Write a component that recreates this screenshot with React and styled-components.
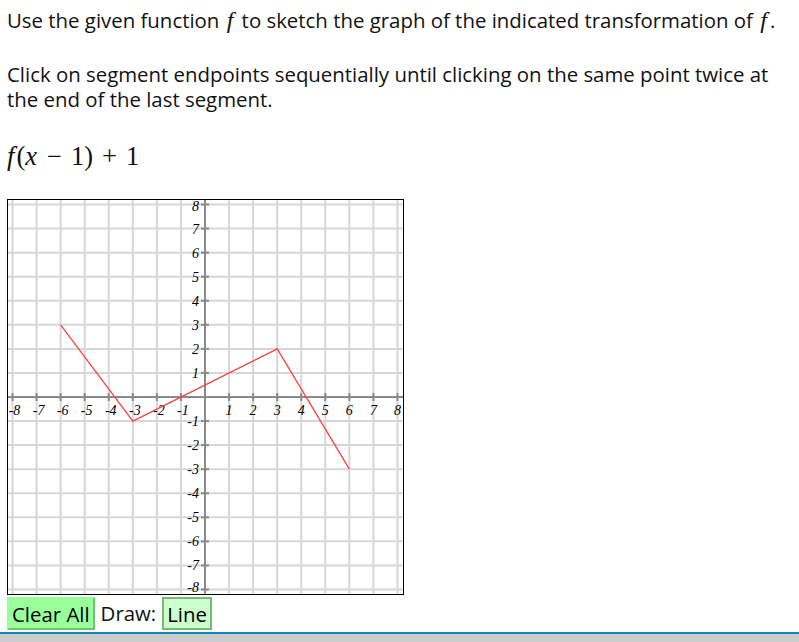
import React from "react"
import styled, { createGlobalStyle } from "styled-components"

const Global = createGlobalStyle`
  html, body {
    margin: 0;
    padding: 0;
    background: #fff;
  }
  body {
    font-family: "Open Sans", "DejaVu Sans", sans-serif;
    color: #111;
  }
`

const Page = styled.div`
  height: 642px;
  display: flex;
  flex-direction: column;
  overflow: hidden;
`

const Content = styled.div`
  padding: 8px 0 0 7px;
  font-size: 20.4px;
  line-height: 25px;
`

const Para = styled.p`
  margin: 0 0 29px 0;
`

const MathI = styled.span`
  font-family: "Liberation Serif", "DejaVu Serif", serif;
  font-style: italic;
  font-size: 24px;
  margin: 0 3px 0 2px;
`

const Formula = styled.div`
  font-family: "Liberation Serif", "DejaVu Serif", serif;
  font-size: 26.5px;
  line-height: 30px;
  margin: 0 0 28px 0;
  display: flex;
  align-items: baseline;
`

const Var = styled.i`
  font-style: italic;
  margin-right: ${(p) => p.$gap || 0}px;
`

const Op = styled.span`
  margin: 0 9px;
`

const Board = styled.div`
  width: 395px;
  height: 394px;
  border: 1px solid #000;
  background: #fff;
`

const Controls = styled.div`
  display: flex;
  align-items: center;
  gap: 6px;
  margin-top: 2px;
  height: 33px;
`

const Button = styled.button`
  font-family: "Open Sans", "DejaVu Sans", sans-serif;
  font-size: 20.4px;
  color: #000;
  height: 33px;
  padding: 0 3px;
  background: ${(p) => (p.$light ? "#ccffcc" : "#99ff99")};
  border: 2px solid ${(p) => (p.$light ? "#7ab87a" : "#99ff99")};
  border-right-color: ${(p) => (p.$light ? "#7ab87a" : "#6fc26f")};
  border-bottom-color: ${(p) => (p.$light ? "#7ab87a" : "#6fc26f")};
  border-radius: 0;
`

const Label = styled.span`
  font-size: 20.4px;
`

const Footer = styled.div`
  margin-top: 2px;
  flex: 1;
  border-top: 2px solid #0a87bd;
  background: #cccccc;
`

const S = 24.06
const OX = 197
const OY = 197
const ticks = [-8, -7, -6, -5, -4, -3, -2, -1, 1, 2, 3, 4, 5, 6, 7, 8]
const points = [
  [-6, 3],
  [-3, -1],
  [3, 2],
  [6, -3],
]

const px = (x) => OX + x * S
const py = (y) => OY - y * S

// keep the end labels inside the board
const nudge = (t) => (t === 8 ? 1 : t === -8 ? -2 : 0)

const Graph = () => (
  <svg width="395" height="394" viewBox="0 0 395 394">
    <g stroke="#d6d6d6" strokeWidth="2">
      {ticks.map((t) => (
        <line key={"v" + t} x1={px(t)} y1="0" x2={px(t)} y2="394" />
      ))}
      {ticks.map((t) => (
        <line key={"h" + t} x1="0" y1={py(t)} x2="395" y2={py(t)} />
      ))}
    </g>
    <g stroke="#8a8a8a" strokeWidth="2">
      <line x1={OX} y1="0" x2={OX} y2="394" />
      <line x1="0" y1={OY} x2="395" y2={OY} />
      {ticks.map((t) => (
        <line key={"tx" + t} x1={px(t)} y1={OY - 4} x2={px(t)} y2={OY + 4} />
      ))}
      {ticks.map((t) => (
        <line key={"ty" + t} x1={OX - 4} y1={py(t)} x2={OX + 4} y2={py(t)} />
      ))}
    </g>
    <g
      fontFamily='"Liberation Serif", "DejaVu Serif", serif'
      fontStyle="italic"
      fontSize="14"
      fill="#000"
    >
      {ticks.map((t) => (
        <text key={"lx" + t} x={px(t) + (t < 0 ? 2 : 0)} y={OY + 18} textAnchor="middle">
          {t < 0 ? "-" + -t : t}
        </text>
      ))}
      {ticks.map((t) => (
        <text key={"ly" + t} x={OX - 6} y={py(t) + 5 + nudge(t)} textAnchor="end">
          {t < 0 ? "-" + -t : t}
        </text>
      ))}
    </g>
    <polyline
      points={points.map(([x, y]) => `${px(x)},${py(y)}`).join(" ")}
      fill="none"
      stroke="#ff4040"
      strokeWidth="1.3"
    />
  </svg>
)

export default function App() {
  return (
    <Page>
      <Global />
      <Content>
        <Para>
          Use the given function <MathI>f</MathI> to sketch the graph of the indicated
          transformation of <MathI>f</MathI>.
        </Para>
        <Para>
          Click on segment endpoints sequentially until clicking on the same point twice at
          the end of the last segment.
        </Para>
        <Formula>
          <Var $gap={2}>f</Var>(<Var $gap={1}>x</Var>
          <Op>−</Op>1)<Op>+</Op>1
        </Formula>
        <Board>
          <Graph />
        </Board>
        <Controls>
          <Button>Clear All</Button>
          <Label>Draw:</Label>
          <Button $light>Line</Button>
        </Controls>
      </Content>
      <Footer />
    </Page>
  )
}
